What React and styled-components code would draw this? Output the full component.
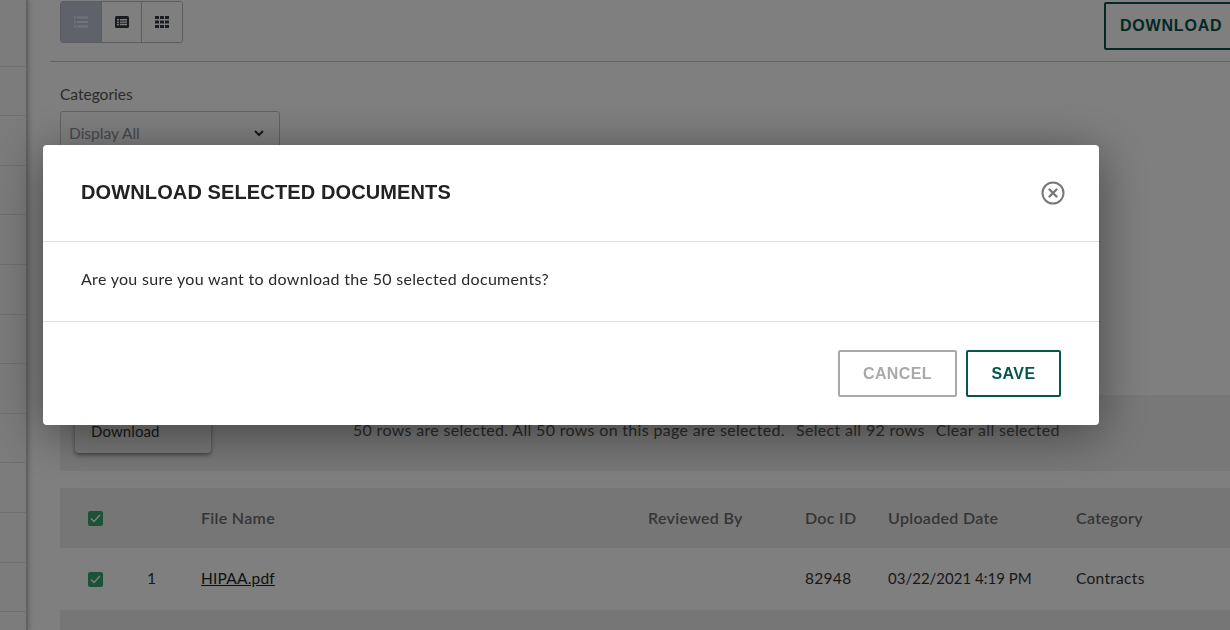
import React from 'react';
import styled, { createGlobalStyle } from 'styled-components';

const GlobalStyle = createGlobalStyle`
  html, body {
    margin: 0;
    height: 100%;
    overflow: hidden;
    background: #fff;
    font-family: Lato, "Open Sans", sans-serif;
  }
  * { box-sizing: border-box; }
`;

const Page = styled.div`
  display: flex;
  width: 1230px;
  height: 630px;
  overflow: hidden;
`;

// Left rail, cut off by the viewport
const Rail = styled.aside`
  flex: 0 0 28px;
  height: 630px;
  padding-top: 17px;
  background: #f6f6f6;
  border-right: 2px solid #c4c4c4;
  box-shadow: 2px 0 4px rgba(0, 0, 0, 0.18);
`;

const RailRow = styled.div`
  height: 49.6px;
  border-bottom: 1px solid #dedede;
`;

const Main = styled.main`
  flex: 0 0 1240px;
  padding: 1px 0 0 22px;
`;

const TopBar = styled.div`
  display: flex;
  justify-content: space-between;
  align-items: flex-start;
  height: 60px;
  padding: 0 0 0 10px;
`;

const Divider = styled.hr`
  margin: 0;
  border: 0;
  border-top: 1px solid #c6c6c6;
`;

const ViewToggle = styled.div`
  display: flex;
  width: 123px;
  height: 42px;
  border: 1px solid #b4b8c4;
  border-radius: 3px;
  overflow: hidden;
`;

const ViewButton = styled.div`
  flex: 1;
  display: flex;
  align-items: center;
  justify-content: center;
  background: ${p => (p.$active ? '#bfc6d2' : '#fff')};
  color: ${p => (p.$active ? '#e6e9f0' : '#333a44')};
  border-left: ${p => (p.$first ? '0' : '1px solid #b4b8c4')};
`;

const TopDownload = styled.button`
  width: 164px;
  height: 48px;
  margin-top: 1px;
  padding: 0 0 0 14px;
  text-align: left;
  background: #fff;
  border: 2px solid #06524a;
  border-radius: 2px;
  color: #06524a;
  font: bold 16px "Liberation Sans", sans-serif;
  letter-spacing: 0.8px;
`;

const Filters = styled.section`
  padding: 22px 0 0 10px;
  height: 333px;
`;

const FieldLabel = styled.div`
  font-size: 15.5px;
  line-height: 20px;
  color: #555;
  margin-bottom: 7px;
`;

const Select = styled.div`
  display: flex;
  align-items: center;
  justify-content: space-between;
  width: 220px;
  height: 46px;
  padding: 0 15px 2px 8px;
  border: 1px solid #c0c4d0;
  border-radius: 3px;
  color: #8c92a0;
  font-size: 15.5px;
`;

const ContentBlock = styled.div`
  margin-left: 10px;
`;

const SelectionBar = styled.div`
  display: flex;
  align-items: center;
  height: 76px;
  margin-bottom: 17px;
  padding: 0 0 8px 15px;
  background: #f0f0f0;
  border-radius: 3px;
  font-size: 16px;
  letter-spacing: 0.32px;
  color: #555;
`;

const BarButton = styled.button`
  flex: 0 0 136px;
  height: 58px;
  margin: 0 142px 0 0;
  padding: 14px 0 0 16px;
  align-self: flex-start;
  text-align: left;
  background: #f0f0f0;
  border: 0;
  border-radius: 4px;
  box-shadow: 0 2px 4px rgba(0, 0, 0, 0.45);
  color: #333;
  font: 15px Lato, sans-serif;
  letter-spacing: 0.1px;
`;

const BarLink = styled.span`
  margin-left: 11px;
  color: #5c5c5c;
`;

const TableRow = styled.div`
  display: grid;
  grid-template-columns: 60px 53px 447px 157px 83px 188px 1fr;
  align-items: center;
  height: ${p => p.$height}px;
  padding: 0 0 2px 28px;
  background: ${p => (p.$shaded ? '#ededed' : '#fff')};
  font-size: 15.5px;
  letter-spacing: 0.3px;
  color: #333;
`;

const HeadCell = styled.div`
  font-weight: 600;
  font-size: 16px;
  color: #6b6b6b;
`;

const DateCell = styled.span`
  font-size: 15px;
  letter-spacing: 0;
`;

const RowNumber = styled.span`
  margin-left: -1px;
`;

const FileLink = styled.a`
  color: #222;
  text-decoration: underline;
  letter-spacing: 0.2px;
`;

const CheckBox = styled.span`
  display: flex;
  align-items: center;
  justify-content: center;
  width: 15px;
  height: 15px;
  margin-top: 2px;
  background: #3ba371;
  border-radius: 2px;
`;

const Backdrop = styled.div`
  position: fixed;
  inset: 0;
  background: rgba(0, 0, 0, 0.5);
`;

const Modal = styled.div`
  position: fixed;
  left: 43px;
  top: 145px;
  width: 1056px;
  height: 280px;
  background: #fff;
  border-radius: 4px;
  box-shadow: 0 8px 50px rgba(0, 0, 0, 0.45);
`;

const ModalHeader = styled.header`
  display: flex;
  align-items: center;
  justify-content: space-between;
  height: 97px;
  padding: 0 34px 2px 38px;
  border-bottom: 1px solid #dedede;
`;

const ModalTitle = styled.h2`
  margin: 0;
  font: bold 20px "Liberation Sans", sans-serif;
  letter-spacing: 0.12px;
  color: #222;
`;

const CloseSlot = styled.span`
  display: flex;
  margin-top: 2px;
`;

const ModalBody = styled.div`
  display: flex;
  align-items: center;
  height: 80px;
  padding: 0 0 6px 38px;
  border-bottom: 1px solid #dedede;
  font-size: 16px;
  letter-spacing: 0.3px;
  color: #2a2a2a;
`;

const ModalFooter = styled.footer`
  display: flex;
  justify-content: flex-end;
  gap: 9px;
  padding: 28px 38px 0 0;
`;

const ModalButton = styled.button`
  width: ${p => p.$width}px;
  height: 47px;
  padding: 0;
  background: #fff;
  border: 2px solid ${p => p.$color};
  border-radius: 2px;
  color: ${p => p.$color};
  font: bold 16px "Liberation Sans", sans-serif;
  letter-spacing: 0.4px;
`;

const ListIcon = () => (
  <svg width="14" height="12" viewBox="0 0 14 12" fill="currentColor">
    <rect x="0" y="0.5" width="2" height="2" />
    <rect x="3" y="0.5" width="11" height="2" />
    <rect x="0" y="5" width="2" height="2" />
    <rect x="3" y="5" width="11" height="2" />
    <rect x="0" y="9.5" width="2" height="2" />
    <rect x="3" y="9.5" width="11" height="2" />
  </svg>
);

const TableIcon = () => (
  <svg width="14" height="12" viewBox="0 0 14 12">
    <rect width="14" height="12" rx="1.5" fill="currentColor" />
    <path d="M2 3h2v1.4H2zM5 3h7v1.4H5zM2 5.4h2v1.4H2zM5 5.4h7v1.4H5zM2 7.8h2v1.4H2zM5 7.8h7v1.4H5z" fill="#fff" />
  </svg>
);

const GridIcon = () => (
  <svg width="14" height="12" viewBox="0 0 14 12" fill="currentColor">
    {[0, 4.5, 9].flatMap(y => [0, 5, 10].map(x => <rect key={`${x}-${y}`} x={x} y={y} width="4" height="3" />))}
  </svg>
);

const Chevron = () => (
  <svg width="10" height="7" viewBox="0 0 10 7" fill="none" stroke="#27303f" strokeWidth="2">
    <path d="M1 1l4 4 4-4" />
  </svg>
);

const Check = () => (
  <svg width="11" height="9" viewBox="0 0 11 9" fill="none" stroke="#fff" strokeWidth="1.4">
    <path d="M1 4.5l3 3 6-6.5" />
  </svg>
);

const CloseIcon = () => (
  <svg width="24" height="24" viewBox="0 0 24 24" fill="none" stroke="#777" strokeLinecap="round">
    <circle cx="12" cy="12" r="10.5" strokeWidth="2" />
    <path d="M8.5 8.5l7 7M15.5 8.5l-7 7" strokeWidth="2.4" />
  </svg>
);

export default function App() {
  return (
    <>
      <GlobalStyle />
      <Page>
        <Rail>
          {Array.from({ length: 13 }, (_, i) => <RailRow key={i} />)}
        </Rail>
        <Main>
          <TopBar>
            <ViewToggle>
              <ViewButton $active $first><ListIcon /></ViewButton>
              <ViewButton><TableIcon /></ViewButton>
              <ViewButton><GridIcon /></ViewButton>
            </ViewToggle>
            <TopDownload>DOWNLOAD</TopDownload>
          </TopBar>
          <Divider />
          <Filters>
            <FieldLabel>Categories</FieldLabel>
            <Select>Display All <Chevron /></Select>
          </Filters>
          <ContentBlock>
            <SelectionBar>
              <BarButton>Download</BarButton>
              50 rows are selected. All 50 rows on this page are selected.
              <BarLink>Select all 92 rows</BarLink>
              <BarLink>Clear all selected</BarLink>
            </SelectionBar>
            <TableRow $height={60} $shaded>
              <CheckBox><Check /></CheckBox>
              <span />
              <HeadCell>File Name</HeadCell>
              <HeadCell>Reviewed By</HeadCell>
              <HeadCell>Doc ID</HeadCell>
              <HeadCell>Uploaded Date</HeadCell>
              <HeadCell>Category</HeadCell>
            </TableRow>
            <TableRow $height={62}>
              <CheckBox><Check /></CheckBox>
              <RowNumber>1</RowNumber>
              <span><FileLink>HIPAA.pdf</FileLink></span>
              <span />
              <span>82948</span>
              <DateCell>03/22/2021 4:19 PM</DateCell>
              <span>Contracts</span>
            </TableRow>
            <TableRow $height={62} $shaded />
          </ContentBlock>
        </Main>
      </Page>
      <Backdrop />
      <Modal>
        <ModalHeader>
          <ModalTitle>DOWNLOAD SELECTED DOCUMENTS</ModalTitle>
          <CloseSlot><CloseIcon /></CloseSlot>
        </ModalHeader>
        <ModalBody>Are you sure you want to download the 50 selected documents?</ModalBody>
        <ModalFooter>
          <ModalButton $width={119} $color="#a9a9a9">CANCEL</ModalButton>
          <ModalButton $width={95} $color="#06564c">SAVE</ModalButton>
        </ModalFooter>
      </Modal>
    </>
  );
}
